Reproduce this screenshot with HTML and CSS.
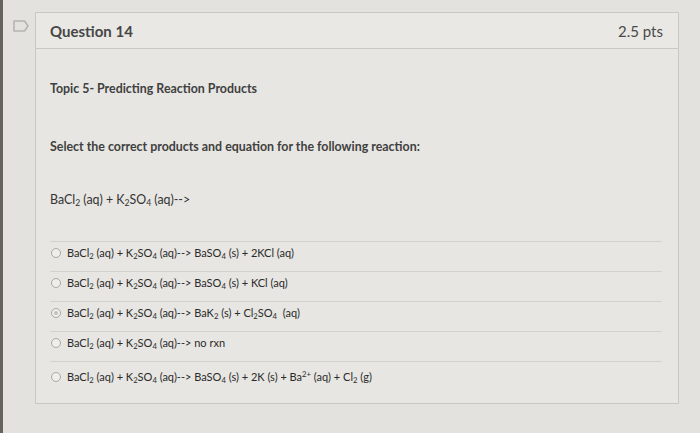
FILE: index.html
```html
<!DOCTYPE html>
<html>
<head>
<meta charset="utf-8">
<link rel="stylesheet" href="styles.css">
</head>
<body>
<div class="page">
  <div class="gutter">
    <svg class="flag" width="18" height="14" viewBox="0 0 18 14">
      <path d="M2 2 H12.5 L16 7 L12.5 12 H2 Z" fill="none" stroke="#b4b3af" stroke-width="1.5" stroke-linejoin="round"/>
    </svg>
  </div>
  <div class="card">
    <div class="card-header">
      <span class="q-title">Question 14</span>
      <span class="q-pts">2.5 pts</span>
    </div>
    <div class="card-body">
      <p class="topic">Topic 5- Predicting Reaction Products</p>
      <p class="prompt">Select the correct products and equation for the following reaction:</p>
      <p class="equation">BaCl<sub>2</sub> (aq) + K<sub>2</sub>SO<sub>4</sub> (aq)--&gt;</p>
      <div class="answers">
        <div class="answer"><span class="radio"></span><span class="label">BaCl<sub>2</sub> (aq) + K<sub>2</sub>SO<sub>4</sub> (aq)--&gt; BaSO<sub>4</sub> (s) + 2KCl (aq)</span></div>
        <div class="answer"><span class="radio"></span><span class="label">BaCl<sub>2</sub> (aq) + K<sub>2</sub>SO<sub>4</sub> (aq)--&gt; BaSO<sub>4</sub> (s) + KCl (aq)</span></div>
        <div class="answer"><span class="radio radio-focus"></span><span class="label">BaCl<sub>2</sub> (aq) + K<sub>2</sub>SO<sub>4</sub> (aq)--&gt; BaK<sub>2</sub> (s) + Cl<sub>2</sub>SO<sub>4</sub>&nbsp; (aq)</span></div>
        <div class="answer"><span class="radio"></span><span class="label">BaCl<sub>2</sub> (aq) + K<sub>2</sub>SO<sub>4</sub> (aq)--&gt; no rxn</span></div>
        <div class="answer answer-last"><span class="radio"></span><span class="label">BaCl<sub>2</sub> (aq) + K<sub>2</sub>SO<sub>4</sub> (aq)--&gt; BaSO<sub>4</sub> (s) + 2K (s) + Ba<sup>2+</sup> (aq) + Cl<sub>2</sub> (g)</span></div>
      </div>
    </div>
  </div>
</div>
</body>
</html>
```

FILE: styles.css
```css
html, body {
  margin: 0;
  height: 100%;
}

body {
  background: #e3e2de;
  font-family: Lato, "Open Sans", sans-serif;
  color: #3c3c3c;
  overflow: hidden;
}

.page {
  display: flex;
  align-items: flex-start;
  height: 100%;
  box-sizing: border-box;
  padding-top: 12px;
  border-left: 3px solid #66625c;
}

.gutter {
  width: 32px;
  flex: none;
}

.flag {
  display: block;
  margin: 7px 0 0 9px;
}

.card {
  width: 644px;
  box-sizing: border-box;
  border: 1px solid #c9c8c4;
  background: #e7e6e2;
}

.card-header {
  height: 35px;
  display: flex;
  align-items: center;
  justify-content: space-between;
  padding: 0 15px 0 14px;
  border-bottom: 1px solid #c9c8c4;
  background: #e9e8e4;
}

.q-title {
  font-size: 15px;
  font-weight: 700;
  color: #474747;
}

.q-pts {
  font-size: 15px;
  color: #4a4a4a;
}

.card-body {
  padding: 31px 16px 12px 14px;
}

.card-body p {
  margin: 0;
  font-size: 12.4px;
  line-height: 18px;
  font-weight: 700;
  color: #404040;
}

.prompt {
  margin-top: 40px !important;
}

.equation {
  margin-top: 35px !important;
  font-weight: 400 !important;
  color: #333 !important;
}

sub, sup {
  font-size: 0.7em;
  line-height: 0;
}

sub {
  vertical-align: -0.25em;
}

sup {
  vertical-align: 0.55em;
}

.answers {
  margin-top: 32px;
}

.answer {
  display: flex;
  align-items: center;
  border-top: 1px solid #d2d1cd;
  padding: 3px 0 10px 1px;
  height: 16px;
}

.answer-last {
  padding-top: 7px;
  padding-bottom: 6px;
}

.radio {
  flex: none;
  width: 8px;
  height: 8px;
  border: 1px solid #a9a8a4;
  border-radius: 50%;
  background: #efeeea;
  margin-right: 6px;
  position: relative;
}

.radio-focus::after {
  content: "";
  position: absolute;
  left: 2px;
  top: 2px;
  width: 4px;
  height: 4px;
  border-radius: 50%;
  background: #c2c1bd;
}

.label {
  font-size: 11px;
  line-height: 16px;
  font-weight: 400;
  color: #2a2a2a;
  white-space: nowrap;
}
```
